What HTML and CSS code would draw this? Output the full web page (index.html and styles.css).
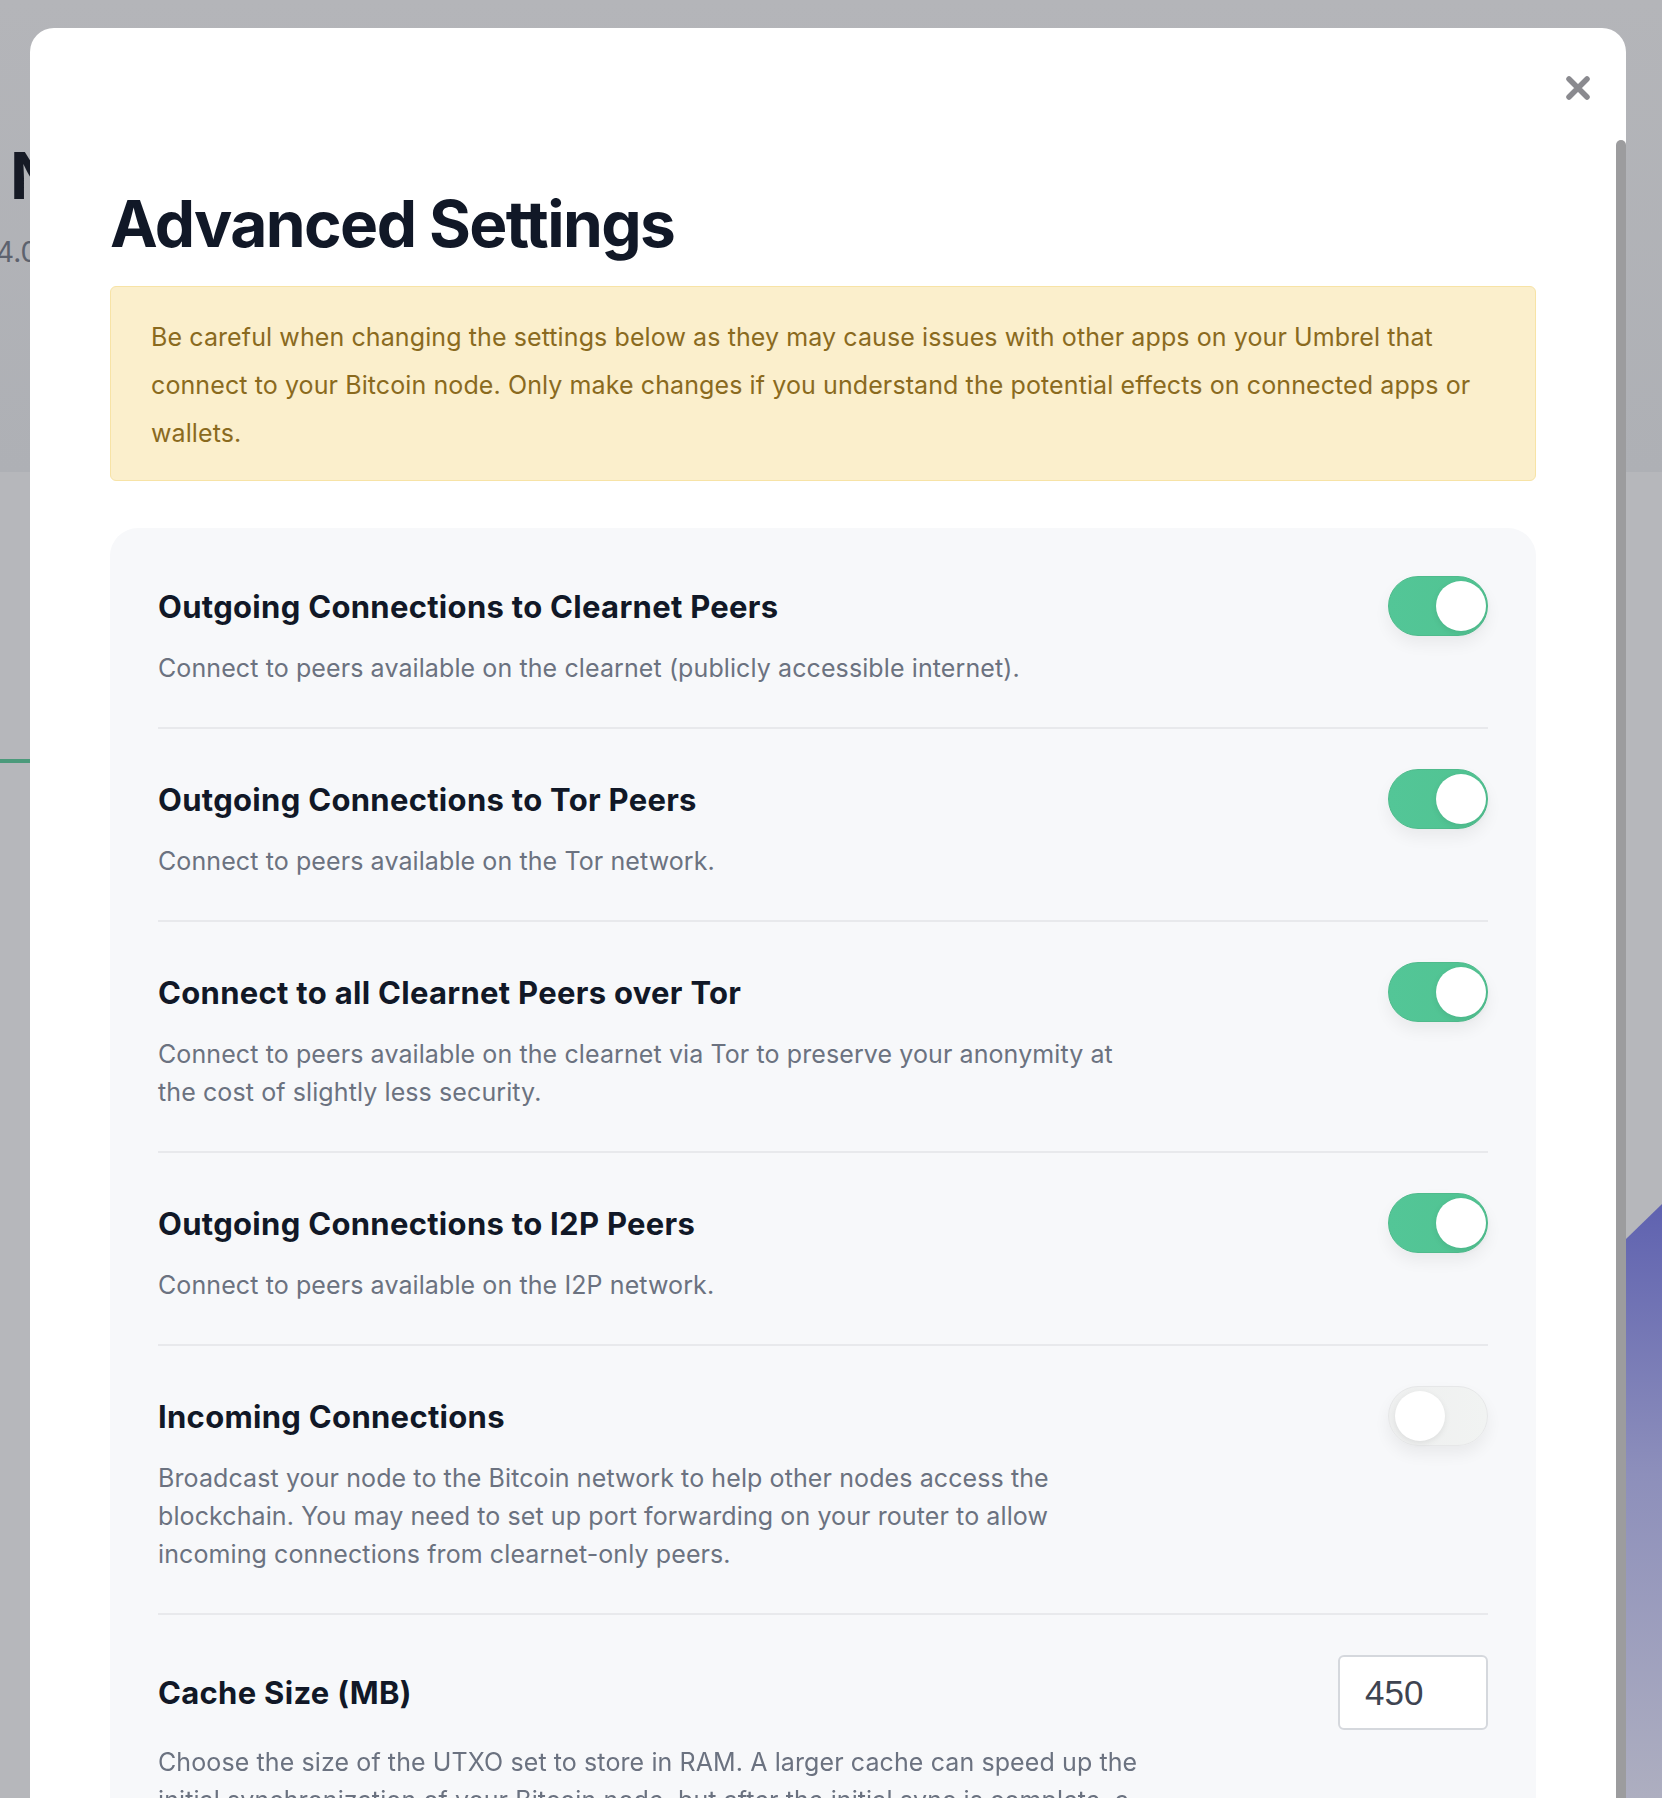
FILE: index.html
```html
<!DOCTYPE html>
<html lang="en">
  <head>
    <meta charset="UTF-8" />
    <meta name="viewport" content="width=device-width, initial-scale=1.0" />
    <title>Bitcoin Node - Advanced Settings</title>
    <link rel="stylesheet" href="styles.css">
  </head>
  <body>
    <div class="app">
      <header class="app-head">
        <h1 class="app-title">Node</h1>
        <p class="app-version">4.0</p>
      </header>
      <div class="app-body">
        <div class="sync-bar"></div>
        <svg class="app-art" width="36" height="600" viewBox="0 0 36 600">
          <defs>
            <linearGradient id="art" x1="0" y1="0" x2="0" y2="1">
              <stop offset="0" stop-color="#5f62b0" />
              <stop offset="0.45" stop-color="#8d8fbb" />
              <stop offset="1" stop-color="#aeafc0" />
            </linearGradient>
          </defs>
          <polygon points="0,35 36,0 36,600 0,600" fill="url(#art)" />
        </svg>
      </div>
    </div>

    <div class="overlay">
      <div class="modal">
        <button class="modal-close" aria-label="Close">
          <svg width="26" height="26" viewBox="0 0 26 26">
            <path d="M4 4 L22 22 M22 4 L4 22" stroke="#8a8a8f" stroke-width="5.5" stroke-linecap="round" fill="none" />
          </svg>
        </button>
        <div class="modal-scroll"></div>

        <h2 class="modal-title">Advanced Settings</h2>

        <div class="warning">
          Be careful when changing the settings below as they may cause issues with other apps on your Umbrel that
          connect to your Bitcoin node. Only make changes if you understand the potential effects on connected apps or
          wallets.
        </div>

        <div class="settings">
          <div class="setting">
            <div class="setting-head">
              <h3>Outgoing Connections to Clearnet Peers</h3>
              <button class="toggle on"><span class="knob"></span></button>
            </div>
            <p class="setting-desc">Connect to peers available on the clearnet (publicly accessible internet).</p>
          </div>

          <div class="setting">
            <div class="setting-head">
              <h3>Outgoing Connections to Tor Peers</h3>
              <button class="toggle on"><span class="knob"></span></button>
            </div>
            <p class="setting-desc">Connect to peers available on the Tor network.</p>
          </div>

          <div class="setting">
            <div class="setting-head">
              <h3>Connect to all Clearnet Peers over Tor</h3>
              <button class="toggle on"><span class="knob"></span></button>
            </div>
            <p class="setting-desc">Connect to peers available on the clearnet via Tor to preserve your anonymity at the cost of slightly less security.</p>
          </div>

          <div class="setting">
            <div class="setting-head">
              <h3>Outgoing Connections to I2P Peers</h3>
              <button class="toggle on"><span class="knob"></span></button>
            </div>
            <p class="setting-desc">Connect to peers available on the I2P network.</p>
          </div>

          <div class="setting">
            <div class="setting-head">
              <h3>Incoming Connections</h3>
              <button class="toggle"><span class="knob"></span></button>
            </div>
            <p class="setting-desc">Broadcast your node to the Bitcoin network to help other nodes access the blockchain. You may need to set up port forwarding on your router to allow incoming connections from clearnet-only peers.</p>
          </div>

          <div class="setting">
            <div class="setting-head">
              <h3>Cache Size (MB)</h3>
              <input class="number-input" type="text" value="450" />
            </div>
            <p class="setting-desc">Choose the size of the UTXO set to store in RAM. A larger cache can speed up the initial synchronization of your Bitcoin node, but after the initial sync is complete, a larger cache will offer little benefit and use more memory.</p>
          </div>
        </div>
      </div>
    </div>
  </body>
</html>
```

FILE: styles.css
```css
* {
  box-sizing: border-box;
}

html,
body {
  height: 100%;
}

body {
  margin: 0;
  overflow: hidden;
  font-family: "Inter", "Noto Sans", sans-serif;
  background-color: #b6b7bb;
}

/* page behind the dialog */

.app-head {
  height: 472px;
  padding: 144px 0 0 10px;
  background: linear-gradient(#b4b5b9, #aeb0b5);
}

.app-title {
  margin: 0;
  font-size: 64px;
  font-weight: 700;
  line-height: 64px;
  color: #161a25;
}

.app-version {
  margin: 30px 0 0 -14px;
  font-size: 28px;
  line-height: 28px;
  color: #5d626e;
}

.app-body {
  display: flex;
  justify-content: space-between;
  align-items: flex-start;
}

.sync-bar {
  width: 40px;
  height: 4px;
  margin-top: 287px;
  background: #4b9a7b;
}

.app-art {
  display: block;
  margin-top: 732px;
}

/* dialog */

.overlay {
  position: fixed;
  inset: 0;
  padding: 28px 36px 0 30px;
}

.modal {
  position: relative;
  height: 100%;
  padding: 0 90px 0 80px;
  background: #fff;
  border-radius: 24px 24px 0 0;
}

.modal-close {
  position: absolute;
  top: 47px;
  right: 35px;
  padding: 0;
  border: none;
  background: none;
  cursor: pointer;
}

.modal-close svg {
  display: block;
}

.modal-scroll {
  position: absolute;
  top: 112px;
  right: 0;
  bottom: 0;
  width: 10px;
  border-radius: 5px 5px 0 0;
  background: #9c9c9e;
}

.modal-title {
  margin: 0;
  padding-top: 156px;
  font-size: 64px;
  font-weight: 700;
  line-height: 80px;
  letter-spacing: -1.6px;
  color: #111827;
}

.warning {
  margin-top: 22px;
  padding: 26px 40px 23px;
  font-size: 25px;
  line-height: 48px;
  letter-spacing: 0.1px;
  color: #8a6a1e;
  background: #fbefcc;
  border: 1px solid #f7e3a6;
  border-radius: 6px;
}

.settings {
  margin-top: 47px;
  padding: 48px 48px 0;
  background: #f7f8fa;
  border-radius: 28px;
}

.setting {
  padding: 40px 0;
  border-bottom: 2px solid #e8e9ec;
}

.setting:first-child {
  padding-top: 0;
}

.setting-head {
  display: flex;
  justify-content: space-between;
  align-items: center;
}

.setting-head h3 {
  margin: 0;
  font-size: 31px;
  font-weight: 700;
  letter-spacing: 0.3px;
  color: #111827;
}

.setting-desc {
  max-width: 986px;
  margin: 13px 0 0;
  font-size: 25px;
  line-height: 38px;
  letter-spacing: 0.1px;
  color: #6b7280;
}

.toggle {
  display: flex;
  align-items: center;
  width: 100px;
  height: 60px;
  padding: 0 6px;
  border: 1px solid #e6e7e8;
  border-radius: 30px;
  background: linear-gradient(90deg, #eeefef, #f1f3f2);
  box-shadow: 0 8px 16px rgba(0, 0, 0, 0.06);
  cursor: pointer;
}

.toggle.on {
  justify-content: flex-end;
  padding: 0 1px;
  border-color: #4fbb8c;
  background: linear-gradient(90deg, #53c697, #51c392);
}

.knob {
  width: 50px;
  height: 50px;
  border-radius: 50%;
  background: #fff;
  box-shadow: 0 2px 6px rgba(0, 0, 0, 0.08);
}

.number-input {
  width: 150px;
  height: 75px;
  padding: 0 0 0 25px;
  font-family: "Liberation Sans", Arial, sans-serif;
  font-size: 35px;
  color: #3e4451;
  background: #fff;
  border: 2px solid #d5d8dd;
  border-radius: 6px;
}
```
